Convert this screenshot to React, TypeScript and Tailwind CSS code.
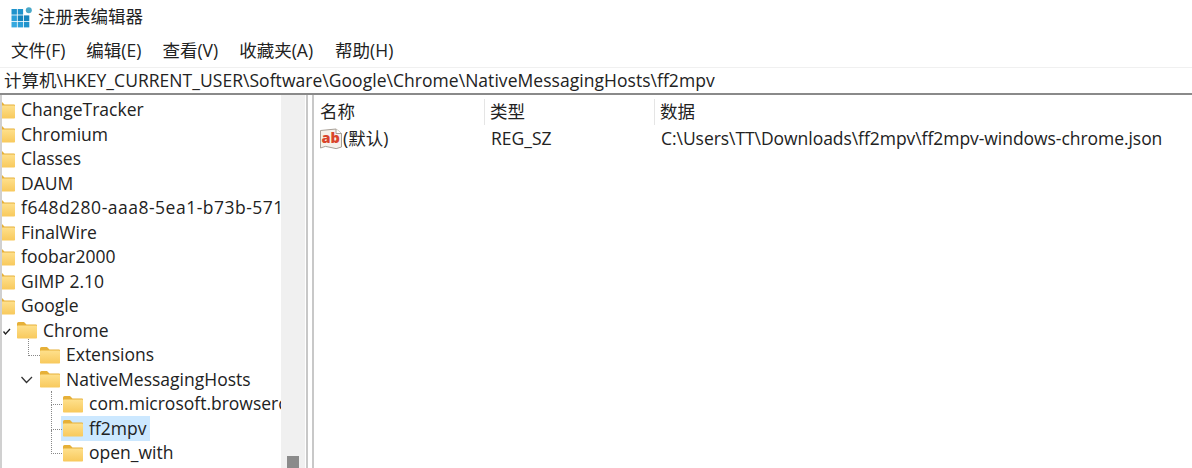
const font = '[font-family:"Open_Sans","Noto_Sans_CJK_SC",sans-serif]';

function Folder() {
  return (
    <svg width="22" height="18" viewBox="0 0 22 18" className="shrink-0">
      <defs>
        <linearGradient id="folderBody" x1="0" y1="0" x2="0" y2="1">
          <stop offset="0" stopColor="#fee08c" />
          <stop offset="1" stopColor="#f8c95c" />
        </linearGradient>
      </defs>
      <path d="M1 2.5 Q1 1 2.5 1 H8 L10.5 3.5 H20 Q21 3.5 21 4.5 V16 Q21 17 20 17 H2 Q1 17 1 16 Z" fill="#e6b038" />
      <rect x="1" y="4.5" width="20" height="13" rx="0.8" fill="url(#folderBody)" />
    </svg>
  );
}

type RowProps = {
  label: string;
  indent: number;
  lineLeft?: number;
  lineHeight?: number;
  lineWidth?: number;
  arrow?: "small" | "big";
  selected?: boolean;
  wide?: boolean;
};

function Row({ label, indent, lineLeft, lineHeight = 24.5, lineWidth = 12, arrow, selected, wide }: RowProps) {
  return (
    <div className="relative h-[24.5px] flex items-center whitespace-nowrap" style={{ paddingLeft: indent }}>
      {arrow === "small" && (
        <svg width="10" height="10" viewBox="0 0 10 10" className="absolute left-[10px] top-[8px]">
          <path d="M1.5 5.5 L3.5 8 L8 3" fill="none" stroke="#222" strokeWidth="1.3" />
        </svg>
      )}
      {arrow === "big" && (
        <svg width="14" height="10" viewBox="0 0 14 10" className="absolute left-[28px] top-[8px]">
          <path d="M1.5 2 L6.5 7.5 L12 2" fill="none" stroke="#333" strokeWidth="1.3" />
        </svg>
      )}
      {lineLeft !== undefined && (
        <span
          className="absolute bottom-[11px] border-l border-b border-dotted border-[#888]"
          style={{ left: lineLeft, height: lineHeight, width: lineWidth }}
        />
      )}
      <span className={`flex items-center h-[24.5px] ${selected ? "bg-[#cce8ff] pl-[1px] -ml-[1px] pr-[4px]" : "pr-[3px]"}`}>
        <Folder />
        <span className={`ml-[5px] ${wide ? "tracking-[0.5px]" : ""}`}>{label}</span>
      </span>
    </div>
  );
}

const roots = ["ChangeTracker", "Chromium", "Classes", "DAUM", "f648d280-aaa8-5ea1-b73b-571", "FinalWire", "foobar2000", "GIMP 2.10", "Google"];

export default function App() {
  return (
    <div className={`w-[1192px] h-[468px] overflow-hidden bg-white flex flex-col text-[17.5px] leading-none text-[#222] ${font}`}>
      <div className="h-[34px] flex items-center pl-[11px] shrink-0">
        <svg width="22" height="22" viewBox="0 0 22 22">
          <rect x="0.5" y="3" width="5.4" height="5.6" fill="#1f93cc" />
          <rect x="6.7" y="3" width="5.4" height="5.6" fill="#1f93cc" />
          <rect x="0.5" y="9.4" width="5.4" height="5.6" fill="#2a9fd8" />
          <rect x="6.7" y="9.4" width="5.4" height="5.6" fill="#1685bd" />
          <rect x="12.9" y="9.4" width="5.4" height="5.6" fill="#1685bd" />
          <rect x="0.5" y="15.8" width="5.4" height="5.6" fill="#35a9df" />
          <rect x="6.7" y="15.8" width="5.4" height="5.6" fill="#2a9fd8" />
          <rect x="12.9" y="15.8" width="5.4" height="5.6" fill="#1f93cc" />
          <circle cx="17.8" cy="4.2" r="3" fill="#4aa8c8" />
        </svg>
        <span className="ml-[5px]">注册表编辑器</span>
      </div>
      <div className="h-[33px] flex items-center pl-[11px] shrink-0">
        <span>文件(F)</span>
        <span className="ml-[21px]">编辑(E)</span>
        <span className="ml-[21px]">查看(V)</span>
        <span className="ml-[21px]">收藏夹(A)</span>
        <span className="ml-[22px]">帮助(H)</span>
      </div>
      <div className="h-[28px] flex items-center pl-[4px] tracking-[0.04px] border-t border-[#f0f0f0] border-b-2 border-b-[#8a8a8a] shrink-0">
        计算机\HKEY_CURRENT_USER\Software\Google\Chrome\NativeMessagingHosts\ff2mpv
      </div>
      <div className="flex-1 flex min-h-0">
        <div className="w-[281px] overflow-hidden border-l-2 border-[#d0d0d0] pt-[2.5px] shrink-0">
          <div className="-ml-[10px]">
            {roots.map((r) => (
              <Row key={r} label={r} indent={2} wide={r.startsWith("f648")} />
            ))}
            <Row label="Chrome" indent={24} arrow="small" />
            <Row label="Extensions" indent={47} lineLeft={36} lineHeight={17} />
            <Row label="NativeMessagingHosts" indent={47} arrow="big" />
            <Row label="com.microsoft.browserc" indent={70} lineLeft={59} lineHeight={14} lineWidth={11} />
            <Row label="ff2mpv" indent={70} lineLeft={59} lineWidth={11} selected />
            <Row label="open_with" indent={70} lineLeft={59} lineWidth={11} />
          </div>
        </div>
        <div className="w-[24px] bg-[#f0f0f0] flex flex-col justify-end items-center shrink-0">
          <div className="w-[12px] h-[12px] bg-[#8b8b8b]" />
        </div>
        <div className="w-[9px] pl-[1px] shrink-0">
          <div className="w-[8px] h-full border-x-2 border-[#c8c8c8]" />
        </div>
        <div className="flex-1 pl-[6px]">
          <div className="h-[32px] pt-[2px] flex items-center">
            <span className="w-[165px] border-r border-[#e5e5e5] h-[26px] flex items-center">名称</span>
            <span className="w-[170px] pl-[5px] border-r border-[#e5e5e5] h-[26px] flex items-center">类型</span>
            <span className="pl-[5px]">数据</span>
          </div>
          <div className="h-[24px] flex items-center">
            <span className="w-[165px] flex items-center -ml-[1px]">
              <svg width="24" height="24" viewBox="0 0 24 24" className="shrink-0">
                <path d="M1.5 3.5 L17 2 L22.5 6.5 V20 Q17 23 12 20.5 Q6 18 1.5 21 Z" fill="#f6f1ea" stroke="#a8a097" />
                <path d="M17 2 V6.5 H22.5" fill="#fff" stroke="#a8a097" />
                <text x="2.5" y="15.5" fontSize="14.5" fontWeight="800" fill="#d9442a" fontFamily="Open Sans">ab</text>
              </svg>
              <span>(默认)</span>
            </span>
            <span className="w-[170px] pl-[7px]">REG_SZ</span>
            <span className="pl-[7px] whitespace-nowrap tracking-[-0.05px]">C:\Users\TT\Downloads\ff2mpv\ff2mpv-windows-chrome.json</span>
          </div>
        </div>
      </div>
    </div>
  );
}
